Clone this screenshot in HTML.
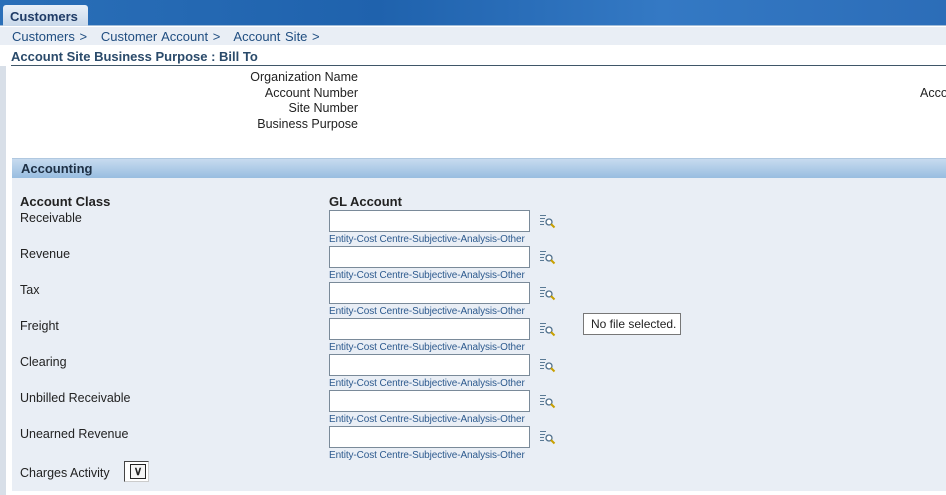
<!DOCTYPE html>
<html><head><style>
*{margin:0;padding:0;box-sizing:border-box}
body{width:946px;height:495px;overflow:hidden;background:#fff;font-family:"Liberation Sans",Tahoma,sans-serif;font-size:12px;color:#222;position:relative}
.a{position:absolute}
.top{left:0;top:0;width:946px;height:26px;background:linear-gradient(90deg,#2a6fb8,#1f62ad 40%,#3479c4 70%,#2c6db8);border-bottom:1px solid #9fbbd8}
.tab{left:3px;top:5px;width:85px;height:21px;background:linear-gradient(#e9f0f8,#c8d8ea);border-radius:3px 3px 0 0;font-weight:bold;font-size:13px;color:#1f3b66;padding:4px 0 0 7px}
.bc{left:0;top:27px;width:946px;height:18px;background:#e9eef5;color:#1f4d80;font-size:13px;padding:2px 0 0 12px;word-spacing:1px}
.title{left:11px;top:49px;width:935px;height:17px;border-bottom:1px solid #3f5668;font-weight:bold;font-size:13px;color:#2a4a6a}
.strip{left:0;top:66px;width:6px;height:429px;background:#d8dfe8}
.hl{right:588px;text-align:right;font-size:12.5px;color:#222}
.sec{left:12px;top:158px;width:934px;height:333px;background:#e9eef5}
.sh{left:12px;top:158px;width:934px;height:20px;background:linear-gradient(#c7dbef,#98bde0);border-top:1px solid #b0c8e0;font-weight:bold;font-size:13px;color:#1d2f44;padding:2px 0 0 9px}
.lbl{left:20px;font-size:12.5px}
.in{left:329px;width:201px;height:22px;background:#fff;border:1px solid #7a8a99}
.hint{left:329px;font-size:10px;color:#2d5a8e;letter-spacing:-0.1px}
.ic{left:539px}
</style></head><body>
<div class="a top"></div>
<div class="a tab">Customers</div>
<div class="a bc">Customers &gt;&nbsp;&nbsp; Customer Account &gt;&nbsp;&nbsp; Account Site &gt;</div>
<div class="a title">Account Site Business Purpose : Bill To</div>
<div class="a strip"></div>
<div class="a hl" style="top:70px">Organization Name</div>
<div class="a hl" style="top:86px">Account Number</div>
<div class="a hl" style="top:101px">Site Number</div>
<div class="a hl" style="top:117px">Business Purpose</div>
<div class="a" style="left:920px;top:86px;font-size:12.5px">Acco</div>
<div class="a sec"></div>
<div class="a sh">Accounting</div>
<div class="a" style="left:20px;top:194px;font-weight:bold;font-size:13px">Account Class</div>
<div class="a" style="left:329px;top:194px;font-weight:bold;font-size:13px">GL Account</div>
<div class="a lbl" style="top:211px">Receivable</div>
<div class="a lbl" style="top:247px">Revenue</div>
<div class="a lbl" style="top:283px">Tax</div>
<div class="a lbl" style="top:319px">Freight</div>
<div class="a lbl" style="top:355px">Clearing</div>
<div class="a lbl" style="top:391px">Unbilled Receivable</div>
<div class="a lbl" style="top:427px">Unearned Revenue</div>
<div class="a lbl" style="top:466px">Charges Activity</div>
<div class="a" style="left:124px;top:461px;width:25px;height:21px;border:1px solid #444;border-right-color:#ccc;border-bottom-color:#ccc;background:#fff"><div style="position:absolute;left:5px;top:2px;width:16px;height:15px;border:1px solid #222;background:#f4f4f4;font-size:12px;font-weight:bold;text-align:center;line-height:13px">&#8744;</div></div>
<div class="a" style="left:583px;top:313px;width:98px;height:22px;border:1px solid #777;background:#fff;padding:3px 0 0 7px">No file selected.</div>
<div id="rows"></div>
<script>
var h='';for(var i=0;i<7;i++){var y=210+36*i;
h+='<div class="a in" style="top:'+y+'px"></div>';
h+='<div class="a hint" style="top:'+(y+24)+'px">Entity-Cost Centre-Subjective-Analysis-Other</div>';
h+='<svg class="a ic" style="top:'+(y+4)+'px" width="17" height="15" viewBox="0 0 17 15"><g stroke="#5a7a95" stroke-width="1"><line x1="1" y1="1.5" x2="7" y2="1.5"/><line x1="1" y1="4.5" x2="6" y2="4.5"/><line x1="1" y1="7.5" x2="5" y2="7.5"/><line x1="1" y1="10.5" x2="5" y2="10.5"/></g><circle cx="10" cy="8" r="3" fill="#fff" stroke="#4f6f8c" stroke-width="1.3"/><line x1="12" y1="10" x2="15.5" y2="13.5" stroke="#c8a000" stroke-width="2"/></svg>';}
document.getElementById('rows').innerHTML=h;
</script>
</body></html>
